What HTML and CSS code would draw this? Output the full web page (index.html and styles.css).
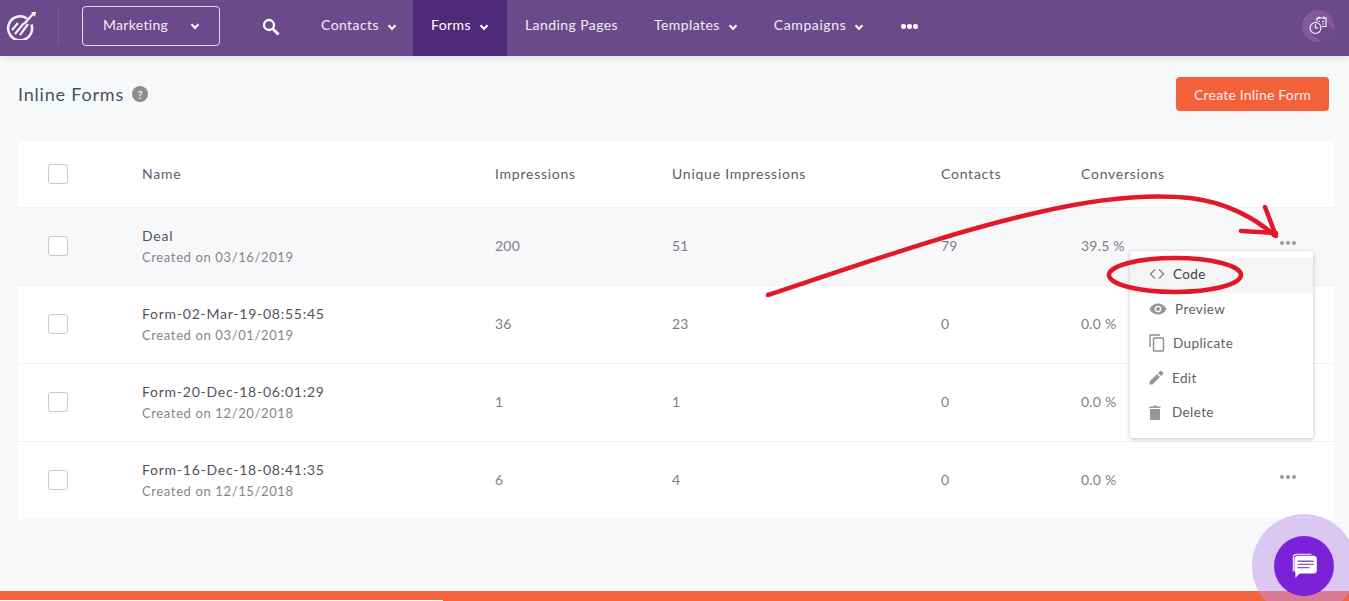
FILE: index.html
```html
<!DOCTYPE html>
<html>
  <head>
    <meta charset="utf-8">
    <title>Inline Forms</title>
    <link rel="stylesheet" href="styles.css">
  </head>
  <body>
    <header class="topbar">
      <svg class="logo" width="36" height="30" viewBox="0 0 36 30" fill="none" stroke="#f4eff8">
        <path d="M24 8.500a12 12 0 1 0 4.500 6" stroke-width="2.600"/>
        <path d="M9 20l6-7M12 24l9-11M17 25l8-11" stroke-width="2.200"/>
        <path d="M21 14l9-10" stroke-width="2.400"/>
        <path d="M28 2l5 0-1 5z" fill="#f4eff8" stroke="none"/>
      </svg>
      <span class="divider"></span>
      <div class="switcher">Marketing<span class="chev"></span></div>
      <svg class="search" width="20" height="20" viewBox="0 0 20 20" fill="none" stroke="#fff">
        <circle cx="8" cy="8" r="5" stroke-width="2.300"/>
        <path d="M12 12l5.500 5.500" stroke-width="2.800"/>
      </svg>
      <nav class="nav">
        <a class="nav-item">Contacts<span class="chev"></span></a>
        <a class="nav-item active wide">Forms<span class="chev"></span></a>
        <a class="nav-item">Landing Pages</a>
        <a class="nav-item wide">Templates<span class="chev"></span></a>
        <a class="nav-item campaigns">Campaigns<span class="chev"></span></a>
        <a class="nav-item nav-more"><i></i><i></i><i></i></a>
      </nav>
      <div class="schedule">
        <svg width="32" height="32" viewBox="0 0 32 32" fill="none" stroke="#fff" stroke-width="1.100">
          <path d="M20 8L32 20V32H20L9 24z" fill="#6f4a8e" stroke="none"/>
          <circle cx="13.500" cy="18" r="5.500"/>
          <path d="M13.500 14.500v3.500h3"/>
          <path d="M15 11.500V8h9v8.500h-4"/>
          <path d="M17 6.500v2.500M22 6.500v2.500M17 11.500h1M20 11.500h2M20 14h2"/>
        </svg>
      </div>
    </header>

    <main class="page">
      <div class="page-head">
        <h1>Inline Forms</h1>
        <span class="help">?</span>
        <button class="create">Create Inline Form</button>
      </div>

      <section class="table">
        <div class="row head">
          <span class="check"></span>
          <span>Name</span>
          <span>Impressions</span>
          <span>Unique Impressions</span>
          <span>Contacts</span>
          <span>Conversions</span>
        </div>
        <div class="row hover">
          <span class="check"></span>
          <div><div class="name">Deal</div><div class="created">Created on 03/16/2019</div></div>
          <span>200</span><span>51</span><span>79</span><span>39.5 %</span>
          <span class="dots"><i></i><i></i><i></i></span>
        </div>
        <div class="row">
          <span class="check"></span>
          <div><div class="name">Form-02-Mar-19-08:55:45</div><div class="created">Created on 03/01/2019</div></div>
          <span>36</span><span>23</span><span>0</span><span>0.0 %</span>
        </div>
        <div class="row">
          <span class="check"></span>
          <div><div class="name">Form-20-Dec-18-06:01:29</div><div class="created">Created on 12/20/2018</div></div>
          <span>1</span><span>1</span><span>0</span><span>0.0 %</span>
        </div>
        <div class="row">
          <span class="check"></span>
          <div><div class="name">Form-16-Dec-18-08:41:35</div><div class="created">Created on 12/15/2018</div></div>
          <span>6</span><span>4</span><span>0</span><span>0.0 %</span>
          <span class="dots"><i></i><i></i><i></i></span>
        </div>
      </section>
    </main>

    <div class="menu">
      <div class="menu-item selected">
        <svg width="16" height="12" viewBox="0 0 16 12" fill="none" stroke="#8d8d92" stroke-width="1.500"><path d="M6 1.500L1.500 6 6 10.500M10 1.500L14.500 6 10 10.500"/></svg>
        Code
      </div>
      <div class="menu-item">
        <svg width="18" height="12" viewBox="0 0 18 12"><path fill="#97979b" d="M9 0.500C5 0.500 1.800 3 0.500 6c1.300 3 4.500 5.500 8.500 5.500s7.200-2.500 8.500-5.500C16.200 3 13 0.500 9 0.500z"/><circle cx="9" cy="6" r="3.300" fill="#fff"/><circle cx="9" cy="6" r="2" fill="#97979b"/></svg>
        Preview
      </div>
      <div class="menu-item">
        <svg width="16" height="18" viewBox="0 0 16 18" fill="none" stroke="#8d8d92" stroke-width="1.400"><path d="M1 13V1h10"/><rect x="4.500" y="4" width="10" height="13" rx="1"/></svg>
        Duplicate
      </div>
      <div class="menu-item">
        <svg width="15" height="15" viewBox="0 0 15 15"><path fill="#97979b" d="M0.500 11.500V14.500H3.500L11 7 8 4zM12 6l2-2a1 1 0 0 0 0-1.400L12.400 1a1 1 0 0 0-1.400 0L9 3z"/></svg>
        Edit
      </div>
      <div class="menu-item">
        <svg width="15" height="15" viewBox="0 0 15 15"><path fill="#97979b" d="M1 4h10v10a1 1 0 0 1-1 1H2a1 1 0 0 1-1-1zM0.500 1.500H4L4.800 0.500h2.400L8 1.500h3.500V3H0.500z"/></svg>
        Delete
      </div>
    </div>

    <svg class="scribble" width="1349" height="601" viewBox="0 0 1349 601" fill="none" stroke="#e3172a" stroke-linecap="round">
      <path d="M768 295C850 268 950 232 1040 212C1100 198 1150 194 1190 198C1225 202 1255 218 1274 235" stroke-width="4.500"/>
      <path d="M1241 231L1276 233M1265 207L1276 236" stroke-width="4.500"/>
      <ellipse cx="1175" cy="275" rx="66" ry="17" stroke-width="4.500"/>
    </svg>

    <div class="chat">
      <span class="chat-btn">
        <svg width="32" height="32" viewBox="0 0 30 30">
          <path d="M5 20V7a3 3 0 0 1 3-3h14" fill="none" stroke="#fff" stroke-width="1"/>
          <path fill="#fff" d="M9 5.500h15a3 3 0 0 1 3 3V19a3 3 0 0 1-3 3H11l-4 4v-4.500a3 3 0 0 1-1-2.500V8.500a3 3 0 0 1 3-3z"/>
          <path d="M9 10.500h15M9 13.500h15M9 16.500h11" stroke="#8e4fd6" stroke-width="1.300"/>
        </svg>
      </span>
    </div>

    <footer class="bottom"><span class="bottom-strip"></span></footer>
  </body>
</html>
```

FILE: styles.css
```css
html, body {
  margin: 0;
  height: 601px;
  overflow: hidden; }
body {
  position: relative;
  background-color: #f7f8fa;
  font-family: "Lato", "Open Sans", sans-serif;
  font-size: 14px;
  color: #4a4f57; }

/* top bar */
.topbar {
  display: flex;
  align-items: center;
  height: 56px;
  background-color: #6b4a8c;
  color: #f2edf6;
  box-shadow: 0 2px 6px rgba(60, 60, 70, 0.12); }
.logo {
  margin: 0 0 6px 3px; }
.divider {
  width: 1px;
  height: 38px;
  margin: 0 0 6px 19px;
  background-color: #7c5f9a; }
.switcher {
  display: flex;
  align-items: center;
  box-sizing: border-box;
  width: 138px;
  height: 40px;
  margin: 0 0 4px 23px;
  padding: 0 0 3px 20px;
  border: 1px solid #e4dcec;
  border-radius: 4px;
  letter-spacing: 0.3px; }
.switcher .chev {
  margin: 0 0 0 24px; }
.search {
  margin: 0 0 3px 41px; }
.nav {
  display: flex;
  align-items: stretch;
  height: 56px;
  margin-left: 22px; }
.nav-item {
  display: flex;
  align-items: center;
  padding: 0 18px 7px;
  letter-spacing: 0.42px; }
.nav-item.wide {
  padding-right: 20px; }
.nav-item.campaigns {
  letter-spacing: 0.6px; }
.nav-item.active {
  background-color: #4f2a78;
  color: #fff; }
.chev {
  display: inline-block;
  width: 4px;
  height: 4px;
  margin: 3px 0 0 10px;
  border-right: 2.500px solid #fff;
  border-bottom: 2.500px solid #fff;
  transform: rotate(45deg); }
.nav-more {
  gap: 1.500px;
  padding: 0 0 3px 21px; }
.nav-more i {
  width: 4.500px;
  height: 4.500px;
  border-radius: 50%;
  background-color: #fff; }
.schedule {
  display: flex;
  overflow: hidden;
  width: 32px;
  height: 32px;
  margin: 0 15px 4px auto;
  border-radius: 50%;
  background-color: #84589f; }

/* page */
.page {
  padding: 21px 15px 0 18px; }
.page-head {
  display: flex;
  align-items: center;
  height: 34px;
  margin-right: 5px; }
.page-head h1 {
  margin: 0;
  font-size: 18px;
  font-weight: 400;
  letter-spacing: 0.8px;
  color: #47525f; }
.help {
  display: flex;
  align-items: center;
  justify-content: center;
  width: 16px;
  height: 16px;
  margin-left: 8px;
  border-radius: 50%;
  background-color: #8e8e8e;
  color: #f0f0f0;
  font-size: 11px;
  font-weight: 700; }
.create {
  width: 153px;
  height: 34px;
  margin-left: auto;
  border: 0;
  border-radius: 4px;
  background-color: #f4603a;
  color: #fdf1ec;
  font-family: inherit;
  font-size: 14px;
  letter-spacing: 0.2px; }
.table {
  margin-top: 30px;
  background-color: #fff; }
.row {
  display: grid;
  grid-template-columns: 124px 353px 177px 269px 140px 1fr 54px;
  align-items: center;
  height: 78px;
  border-top: 1px solid #eff0f2;
  box-sizing: border-box;
  letter-spacing: 0.2px;
  color: #7d7f84; }
.row > span {
  padding-bottom: 2px; }
.row.head {
  height: 66px;
  border-top: 0;
  letter-spacing: 0.75px;
  color: #5a5f66; }
.row.hover {
  background-color: #f8f8fb; }
.row > .check {
  box-sizing: border-box;
  width: 20px;
  height: 20px;
  margin: 0 0 2px 30px;
  padding: 0;
  border: 1px solid #c9c9cc;
  border-radius: 3px;
  background-color: #fff; }
.row.head > .check {
  margin-bottom: 0; }
.name {
  color: #4f545c;
  line-height: 20px;
  letter-spacing: 0.75px; }
.created {
  font-size: 13px;
  line-height: 20px;
  margin-top: 1px;
  letter-spacing: 0.63px;
  color: #84868b; }
.row > .dots {
  display: flex;
  grid-column: 7;
  gap: 2px;
  margin-bottom: 8px;
  padding: 0; }
.dots i {
  width: 4px;
  height: 4px;
  border-radius: 50%;
  background-color: #9a9aa0; }

/* row menu */
.menu {
  position: absolute;
  left: 1130px;
  top: 251px;
  width: 183px;
  height: 187px;
  padding-top: 7px;
  box-sizing: border-box;
  background-color: #fff;
  box-shadow: 0 1px 4px rgba(0, 0, 0, 0.25);
  border-radius: 2px;
  font-size: 13.500px;
  letter-spacing: 0.4px;
  color: #5d6066; }
.menu-item {
  display: flex;
  align-items: center;
  box-sizing: border-box;
  gap: 8px;
  height: 34.500px;
  padding: 0 0 2px 19px; }
.menu-item.selected {
  background-color: #f5f5f5;
  color: #3d4046; }

/* hand drawn marks on the screenshot */
.scribble {
  position: absolute;
  left: 0;
  top: 0;
  pointer-events: none; }

/* chat bubble and bottom banner */
.bottom {
  position: absolute;
  left: 0;
  right: 0;
  bottom: 0;
  height: 10px;
  background-color: #f4623b;
  box-shadow: 0 -6px 0 #fbfcfb; }
.bottom-strip {
  position: absolute;
  left: 0;
  bottom: 0;
  width: 443px;
  height: 1px;
  background-color: #fff; }
.chat {
  position: absolute;
  z-index: 2;
  left: 1252px;
  top: 514px;
  display: flex;
  align-items: center;
  justify-content: center;
  width: 104px;
  height: 104px;
  border-radius: 50%;
  background-color: rgba(190, 150, 235, 0.5); }
.chat-btn {
  display: flex;
  align-items: center;
  justify-content: center;
  width: 60px;
  height: 60px;
  border-radius: 50%;
  background-color: #7b22d8; }
```
